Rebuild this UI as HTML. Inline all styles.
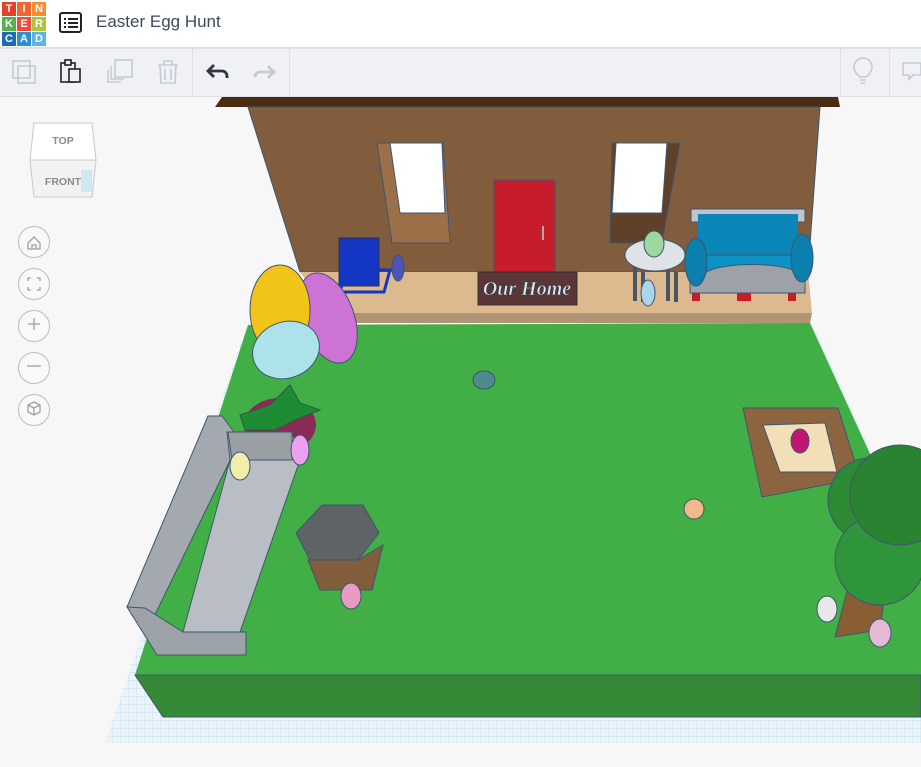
<!DOCTYPE html>
<html><head><meta charset="utf-8"><style>
body{margin:0;width:921px;height:767px;overflow:hidden;background:#f7f7f8;font-family:"Liberation Sans",sans-serif;position:relative}
#hdr{position:absolute;left:0;top:0;width:921px;height:47px;background:#fff;border-bottom:2px solid #dde1e6}
#tb{position:absolute;left:0;top:49px;width:921px;height:47px;background:#f0f1f4;border-bottom:1px solid #dde1e6}
.lg{position:absolute;width:14px;height:14px;color:#fff;font-size:11px;font-weight:bold;text-align:center;line-height:14px}
.title{position:absolute;left:96px;top:12px;font-size:17px;color:#3d4a59}
.sep{position:absolute;top:49px;width:1px;height:47px;background:#dde1e6}
.cb{position:absolute;left:18px;width:32px;height:32px;border:1px solid #b9bcc1;border-radius:50%;box-sizing:border-box;background:#f9f9f9}
</style></head><body>
<div id="hdr"></div>
<div class="lg" style="left:2px;top:2px;background:#e4412b">T</div>
<div class="lg" style="left:17px;top:2px;background:#f0662d">I</div>
<div class="lg" style="left:32px;top:2px;background:#f68d35">N</div>
<div class="lg" style="left:2px;top:17px;background:#56b04a">K</div>
<div class="lg" style="left:17px;top:17px;background:#f24b34">E</div>
<div class="lg" style="left:32px;top:17px;background:#a9c63c">R</div>
<div class="lg" style="left:2px;top:32px;background:#1b6cb5">C</div>
<div class="lg" style="left:17px;top:32px;background:#2d8fd0">A</div>
<div class="lg" style="left:32px;top:32px;background:#5bb5e3">D</div>
<svg style="position:absolute;left:59px;top:12px" width="24" height="22"><rect x="1" y="1" width="21" height="19" rx="2" fill="none" stroke="#222" stroke-width="2"/><g fill="#222"><rect x="5" y="6" width="2" height="2"/><rect x="9" y="6" width="10" height="2"/><rect x="5" y="10" width="2" height="2"/><rect x="9" y="10" width="10" height="2"/><rect x="5" y="14" width="2" height="2"/><rect x="9" y="14" width="10" height="2"/></g></svg>
<div class="title">Easter Egg Hunt</div>
<div id="tb"></div>
<div class="sep" style="left:192px"></div><div class="sep" style="left:289px"></div><div class="sep" style="left:840px"></div><div class="sep" style="left:889px"></div>
<svg style="position:absolute;left:0;top:49px" width="921" height="47" fill="none" stroke-width="1.6">
<g stroke="#c5cbd3"><rect x="13" y="12" width="17" height="17"/><rect x="18" y="17" width="17" height="17"/></g>
<g stroke="#222"><rect x="61" y="14" width="14" height="19"/><rect x="69" y="20" width="11" height="13" fill="#f0f1f4"/><rect x="65" y="11" width="6" height="5" fill="#f0f1f4"/></g>
<g stroke="#c5cbd3"><rect x="115" y="11" width="17" height="17"/><path d="M111 17v13h13M108 21v12h13"/></g>
<g stroke="#c5cbd3"><path d="M158 16h20M164 16v-4h8v4M160 16l1 18h14l1-18M165 20v11M171 20v11"/></g>
<path d="M208 22h14a5 5 0 0 1 5 5v2M214 16l-6 6 6 6" stroke="#2c3540" stroke-width="2.8"/>
<path d="M274 23h-14a5 5 0 0 0-5 5M268 17l6 6-6 6" stroke="#c5cbd3" stroke-width="2.8"/>
<g stroke="#c5cbd3"><path d="M860 28c-4-3-6-6-6-10a9 9 0 0 1 18 0c0 4-2 7-6 10zM860 31h6M861 34h4"/><path d="M903 14h18v12h-8l-4 4v-4h-6z"/></g>
</svg>
<svg style="position:absolute;left:26px;top:118px" width="74" height="84">
<path d="M8 5h58l4 37H4z" fill="#fff" stroke="#c8c8c8"/>
<path d="M4 42h66l-4 37H8z" fill="#f2f2f2" stroke="#c8c8c8"/>
<rect x="55" y="52" width="11" height="22" fill="#cfe6f3"/>
<text x="37" y="26" font-size="10.5" font-weight="bold" fill="#8a8a8a" text-anchor="middle">TOP</text>
<text x="37" y="67" font-size="10.5" font-weight="bold" fill="#8a8a8a" text-anchor="middle">FRONT</text>
</svg>
<div class="cb" style="top:226px"></div><div class="cb" style="top:268px"></div><div class="cb" style="top:310px"></div><div class="cb" style="top:352px"></div><div class="cb" style="top:394px"></div>
<svg style="position:absolute;left:18px;top:226px" width="32" height="200" fill="none" stroke="#9aa0a6" stroke-width="1.3">
<path d="M10 17l6-6 6 6v6h-12zM14 23v-4h4v4"/>
<path d="M10 55v-3h3M19 52h3v3M22 61v3h-3M13 64h-3v-3"/>
<path d="M16 92v12M10 98h12"/><path d="M9 140h14"/>
<path d="M16 176l6 3v7l-6 3-6-3v-7zM10 179l6 3 6-3M16 182v7"/>
</svg>
<svg style="position:absolute;left:0;top:97px" width="921" height="670" viewBox="0 97 921 670">
<defs><pattern id="g" width="8" height="8" patternUnits="userSpaceOnUse"><path d="M8 0H0V8" fill="none" stroke="#9fd2ec" stroke-width="0.7"/></pattern></defs>
<polygon points="245,330 810,320 921,560 921,743 105,743" fill="url(#g)"/>
<polygon points="245,330 810,320 921,560 921,743 105,743" fill="#d8eef8" opacity="0.35"/>
<polygon points="215,107 222,97 838,97 840,107" fill="#4a2c12"/>
<polygon points="248,107 820,107 808,272 300,272" fill="#815d3e" stroke="#3e5670"/>
<polygon points="377,143 443,143 450,243 392,243" fill="#9c6f48" stroke="#3e5670"/>
<polygon points="390,143 442,143 445,213 400,213" fill="#fff" stroke="#3e5670"/>
<polygon points="612,143 680,143 662,243 610,243" fill="#5e4128" stroke="#3e5670"/>
<polygon points="616,143 667,143 662,213 612,213" fill="#fff" stroke="#3e5670"/>
<rect x="494" y="180" width="61" height="92" fill="#c71c2b" stroke="#3e5670"/>
<rect x="542" y="226" width="2" height="14" fill="#aaa"/>
<polygon points="300,272 808,272 812,313 330,313" fill="#dcb98f"/>
<polygon points="330,313 812,313 810,323 335,323" fill="#b09475"/>
<polygon points="248,325 810,323 921,565 921,675 135,675" fill="#41ae46"/>
<polygon points="135,675 921,675 921,717 163,717" fill="#358a38" stroke="#3e5670"/>
<rect x="478" y="272" width="99" height="33" fill="#5a3637" stroke="#333"/>
<text x="527" y="295" font-family="Liberation Serif" font-size="20" font-weight="bold" font-style="italic" fill="#dfe5ec" stroke="#2a3a4a" stroke-width="0.6" text-anchor="middle">Our Home</text>
<rect x="339" y="238" width="40" height="48" fill="#1436c4" stroke="#333"/>
<polygon points="346,270 390,270 384,292 340,292" fill="none" stroke="#1436c4" stroke-width="3"/>
<ellipse cx="398" cy="268" rx="6" ry="13" fill="#4d56b8" stroke="#3e5670"/>
<path d="M635 265v36M643 272v30M668 265v36M676 272v30" stroke="#4a5562" stroke-width="4"/>
<ellipse cx="655" cy="255" rx="30" ry="16" fill="#dfe2e6" stroke="#3e5670"/>
<ellipse cx="654" cy="244" rx="10" ry="13" fill="#9cd89f" stroke="#3e5670"/>
<ellipse cx="648" cy="293" rx="7" ry="13" fill="#a9d6ea" stroke="#3e5670"/>
<rect x="691" y="209" width="114" height="13" fill="#bfc5cb" stroke="#3e5670"/>
<rect x="698" y="214" width="100" height="45" fill="#0a86b8"/>
<rect x="690" y="255" width="115" height="38" fill="#9ca2a8" stroke="#3e5670"/>
<path d="M703 275c10-14 90-14 96 0v-20h-96z" fill="#0b93c8" stroke="#3e5670"/>
<ellipse cx="696" cy="262" rx="11" ry="24" fill="#0b7fae" stroke="#3e5670"/>
<ellipse cx="802" cy="258" rx="11" ry="24" fill="#0b7fae" stroke="#3e5670"/>
<g fill="#c71c2b"><rect x="692" y="293" width="8" height="8"/><rect x="737" y="293" width="14" height="8"/><rect x="788" y="293" width="8" height="8"/></g>
<ellipse cx="328" cy="318" rx="26" ry="47" fill="#cd73d6" stroke="#3e5670" transform="rotate(-20 328 318)"/>
<ellipse cx="280" cy="310" rx="30" ry="45" fill="#f2c41a" stroke="#3e5670"/>
<ellipse cx="286" cy="350" rx="34" ry="28" fill="#aee2ea" stroke="#3e5670" transform="rotate(-20 286 350)"/>
<ellipse cx="484" cy="380" rx="11" ry="9" fill="#4e8a8e" stroke="#3e5670"/>
<ellipse cx="280" cy="425" rx="36" ry="27" fill="#8a2a57"/>
<path d="M240 415l30-10 20-20 10 18 20 7-25 10-20 10-30 0z" fill="#1e8c33" stroke="#2f5a42"/>
<polygon points="208,416 222,416 240,440 150,625 127,607" fill="#a3a9ae" stroke="#3e5670"/>
<polygon points="227,432 292,432 300,460 240,632 183,632 230,460" fill="#b8bec4" stroke="#3e5670"/>
<polygon points="127,607 145,608 183,632 246,632 246,655 157,655" fill="#9ca2a7" stroke="#3e5670"/>
<polygon points="228,432 292,432 292,460 232,460" fill="#9a9fa4" stroke="#3e5670"/>
<ellipse cx="240" cy="466" rx="10" ry="14" fill="#f0eeaa" stroke="#3e5670"/>
<ellipse cx="300" cy="450" rx="9" ry="15" fill="#ee9ff0" stroke="#3e5670"/>
<polygon points="308,560 358,560 383,545 372,590 320,590" fill="#815d3e" stroke="#3e5670"/>
<polygon points="322,505 363,505 379,533 358,560 310,560 296,533" fill="#5e6366" stroke="#3e5670"/>
<ellipse cx="351" cy="596" rx="10" ry="13" fill="#e89bc2" stroke="#3e5670"/>
<ellipse cx="694" cy="509" rx="10" ry="10" fill="#f2b98a" stroke="#3e5670"/>
<polygon points="743,408 838,408 860,478 762,497" fill="#8c6540" stroke="#3e5670"/>
<polygon points="763,425 825,423 837,472 780,472" fill="#f2dfb7" stroke="#3e5670"/>
<ellipse cx="800" cy="441" rx="9" ry="12" fill="#c1166f" stroke="#3e5670"/>
<polygon points="850,580 890,555 880,630 835,637" fill="#8a5e35" stroke="#3e5670"/>
<circle cx="870" cy="500" r="42" fill="#2b8a33" stroke="#3e5670"/>
<circle cx="880" cy="560" r="45" fill="#2f953a" stroke="#3e5670"/>
<circle cx="900" cy="495" r="50" fill="#2a8331" stroke="#3e5670"/>
<ellipse cx="827" cy="609" rx="10" ry="13" fill="#e8e8ea" stroke="#3e5670"/>
<ellipse cx="880" cy="633" rx="11" ry="14" fill="#e3b9d6" stroke="#3e5670"/>
</svg>
</body></html>
